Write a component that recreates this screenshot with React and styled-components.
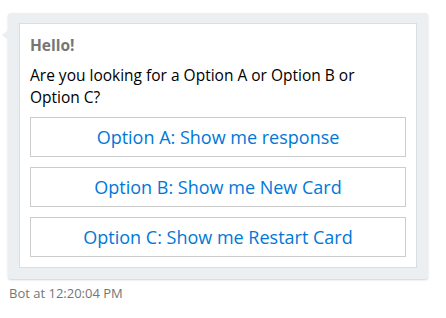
import React from "react";
import styled, { createGlobalStyle } from "styled-components";

const Global = createGlobalStyle`
  html, body { margin: 0; padding: 0; background: #ffffff; }
  body { font-family: "Open Sans", "Noto Sans", sans-serif; }
`;

const Page = styled.div`
  padding: 13px 0 0 8px;
  width: 420px;
`;

const Bubble = styled.div`
  position: relative;
  background: #eceff1;
  border-radius: 3px;
  padding: 10px 11px 11px 11px;
  box-shadow: 0 1px 2px rgba(0, 0, 0, 0.18);
`;

const Notch = styled.span`
  position: absolute;
  left: -6px;
  top: 17px;
  width: 0;
  height: 0;
  border-top: 5px solid transparent;
  border-bottom: 5px solid transparent;
  border-right: 6px solid #eceff1;
`;

const Card = styled.div`
  background: #ffffff;
  border: 1px solid #d9dee4;
  padding: 11px 10px 10px 10px;
`;

const Title = styled.div`
  font-size: 15.5px;
  font-weight: 700;
  color: #767676;
  line-height: 20px;
`;

const Body = styled.div`
  margin-top: 9px;
  font-size: 15.5px;
  color: #000000;
  line-height: 22px;
`;

const Actions = styled.div`
  margin-top: 9px;
  display: flex;
  flex-direction: column;
  gap: 10px;
`;

const ActionButton = styled.button`
  height: 40px;
  box-sizing: border-box;
  background: #ffffff;
  border: 1px solid #cccccc;
  border-radius: 0;
  font-family: "Open Sans", "Noto Sans", sans-serif;
  font-size: 18px;
  color: #0078d7;
  cursor: pointer;
  padding: 0 8px;
`;

const Stamp = styled.div`
  margin-top: 6px;
  padding-left: 1px;
  font-size: 13px;
  color: #767676;
  line-height: 17px;
`;

const options = [
  "Option A: Show me response",
  "Option B: Show me New Card",
  "Option C: Show me Restart Card",
];

export default function App() {
  return (
    <>
      <Global />
      <Page>
        <Bubble>
          <Notch />
          <Card>
            <Title>Hello!</Title>
            <Body>Are you looking for a Option A or Option B or Option C?</Body>
            <Actions>
              {options.map((o) => (
                <ActionButton key={o}>{o}</ActionButton>
              ))}
            </Actions>
          </Card>
        </Bubble>
        <Stamp>Bot at 12:20:04 PM</Stamp>
      </Page>
    </>
  );
}
